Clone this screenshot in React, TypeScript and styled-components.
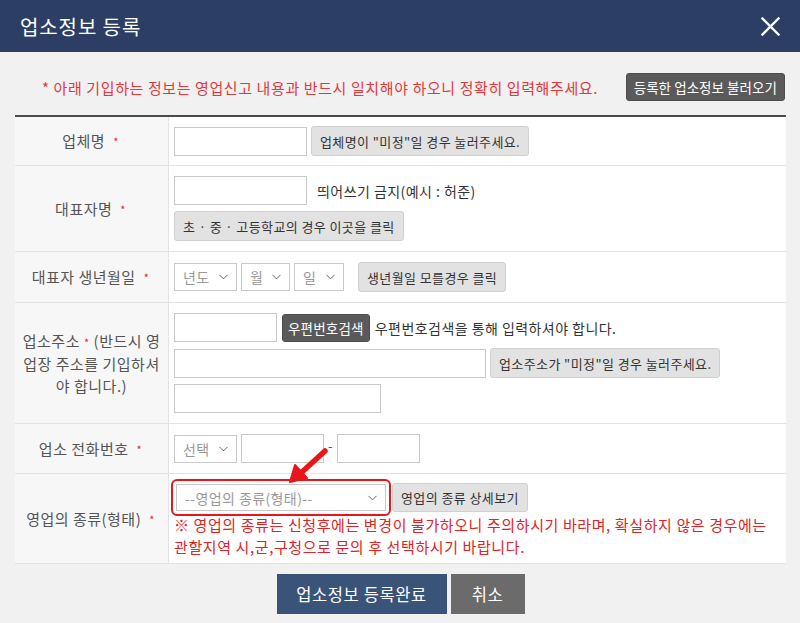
import React from 'react';
import styled, { createGlobalStyle } from 'styled-components';
import { ChevronDown } from 'lucide-react';

const GlobalStyle = createGlobalStyle`
  html, body {
    margin: 0;
    padding: 0;
    background: #f1f1f1;
  }
  * {
    box-sizing: border-box;
  }
  body {
    font-family: 'Noto Sans CJK KR', 'Noto Sans', sans-serif;
  }
`;

const Modal = styled.div`
  width: 800px;
  height: 623px;
  background: #f1f1f1;
  display: flex;
  flex-direction: column;
  overflow: hidden;
`;

const Header = styled.div`
  height: 52px;
  background: #2c3e63;
  display: flex;
  align-items: center;
  justify-content: space-between;
  padding: 0 20px 0 20px;
`;

const Title = styled.h1`
  margin: 0;
  font-size: 20px;
  font-weight: 400;
  color: #fff;
  letter-spacing: 0.9px;
`;

const CloseButton = styled.button`
  border: 0;
  background: none;
  padding: 0;
  width: 20px;
  height: 20px;
  display: flex;
  align-items: center;
  justify-content: center;
  cursor: pointer;
`;

const TopBar = styled.div`
  display: flex;
  align-items: center;
  justify-content: space-between;
  padding: 21px 15px 14px 42px;
`;

const Notice = styled.p`
  margin: 0;
  font-size: 15px;
  color: #e5383b;
  letter-spacing: 0.6px;
`;

const DarkButton = styled.button<{ $small?: boolean }>`
  height: 28px;
  padding: 0 ${({ $small }) => ($small ? '5px' : '7px')};
  background: #5a5a5a;
  border: 1px solid #4d4d4d;
  border-radius: 3px;
  color: #fff;
  font-family: inherit;
  font-size: 13.5px;
  letter-spacing: ${({ $small }) => ($small ? '0.2px' : '0.05px')};
  white-space: nowrap;
  cursor: pointer;
`;

const Table = styled.div`
  margin: 0 14px 0 15px;
  border-top: 2px solid #4a4a4a;
`;

const FormRow = styled.div`
  display: grid;
  grid-template-columns: 154px 1fr;
  border-bottom: 1px solid #e3e3e3;
`;

const LabelCell = styled.div`
  background: #f7f7f7;
  border-right: 1px solid #e3e3e3;
  display: flex;
  align-items: center;
  justify-content: center;
  text-align: center;
  padding: 0 3px;
  font-size: 15px;
  line-height: 22px;
  letter-spacing: 0.5px;
  color: #555;
`;

const Star = styled.span`
  color: #e8262b;
  font-size: 11px;
  margin-left: 8px;
  margin-right: 2px;
`;

const ValueCell = styled.div<{ $pad?: number }>`
  position: relative;
  background: #fff;
  padding: ${({ $pad }) => ($pad ?? 10)}px 5px;
  display: flex;
  flex-direction: column;
  align-items: flex-start;
  gap: 6px;
`;

const Line = styled.div<{ $gap?: number }>`
  display: flex;
  align-items: center;
  gap: ${({ $gap }) => ($gap ?? 4)}px;
`;

const TextInput = styled.input<{ $w: number }>`
  width: ${({ $w }) => $w}px;
  height: 29px;
  border: 1px solid #c9c9c9;
  background: #fff;
  padding: 0 6px;
  font-family: inherit;
  font-size: 13.5px;
  outline: none;
`;

const SelectWrap = styled.div<{ $w: number; $h?: number }>`
  position: relative;
  width: ${({ $w }) => $w}px;
  height: ${({ $h }) => $h ?? 28}px;
  flex: none;

  svg {
    position: absolute;
    right: 6px;
    top: 50%;
    transform: translateY(-50%);
    pointer-events: none;
  }
`;

const Select = styled.select`
  appearance: none;
  -webkit-appearance: none;
  width: 100%;
  height: 100%;
  border: 1px solid #c9c9c9;
  border-radius: 0;
  background: #fff;
  padding: 0 20px 0 8px;
  font-family: inherit;
  font-size: 14px;
  letter-spacing: 0.4px;
  color: #999;
  outline: none;
`;

const GrayButton = styled.button`
  height: 30px;
  padding: 0 8px;
  background: #e2e2e2;
  border: 1px solid #d0d0d0;
  border-radius: 3px;
  color: #333;
  font-family: inherit;
  font-size: 13px;
  letter-spacing: 0.4px;
  white-space: nowrap;
  cursor: pointer;
`;

const Hint = styled.span`
  font-size: 14px;
  letter-spacing: 0.45px;
  color: #333;
  white-space: nowrap;
`;

const Dash = styled.span`
  font-size: 13px;
  color: #555;
  margin: 0;
  align-self: flex-start;
  margin-top: 2px;
`;

const Highlight = styled.div`
  margin-left: -3px;
  padding: 3px;
  border: 2px solid #e8161b;
  border-radius: 6px;
  display: flex;
`;

const Warning = styled.p`
  margin: -2px 0 0;
  font-size: 15px;
  line-height: 22px;
  letter-spacing: 0.6px;
  color: #e02424;
  white-space: nowrap;
`;

const Pointer = styled.svg`
  position: absolute;
  left: 115px;
  top: -31px;
  pointer-events: none;
`;

const Actions = styled.div`
  display: flex;
  justify-content: center;
  gap: 4px;
  margin-top: 10px;
  padding-left: 1px;
`;

const ActionButton = styled.button<{ $variant: 'primary' | 'muted' }>`
  height: 40px;
  width: ${({ $variant }) => ($variant === 'primary' ? '170px' : '74px')};
  padding: 0;
  border: 0;
  border-radius: 0;
  background: ${({ $variant }) => ($variant === 'primary' ? '#3a5479' : '#6b6b6b')};
  color: #fff;
  font-family: inherit;
  font-size: 16.5px;
  letter-spacing: 0.6px;
  cursor: pointer;
`;

const Req = () => <Star>*</Star>;

function Dropdown({ width, height, placeholder }: { width: number; height?: number; placeholder: string }) {
  return (
    <SelectWrap $w={width} $h={height}>
      <Select defaultValue="">
        <option value="">{placeholder}</option>
      </Select>
      <ChevronDown size={15} strokeWidth={1.6} color="#666" />
    </SelectWrap>
  );
}

export default function App() {
  return (
    <>
      <GlobalStyle />
      <Modal>
        <Header>
          <Title>업소정보 등록</Title>
          <CloseButton aria-label="닫기">
            <svg width="19" height="19" viewBox="0 0 19 19">
              <path d="M1.5 1.5 L17.5 17.5 M17.5 1.5 L1.5 17.5" stroke="#fff" strokeWidth="2.4" strokeLinecap="square" />
            </svg>
          </CloseButton>
        </Header>

        <TopBar>
          <Notice>* 아래 기입하는 정보는 영업신고 내용과 반드시 일치해야 하오니 정확히 입력해주세요.</Notice>
          <DarkButton>등록한 업소정보 불러오기</DarkButton>
        </TopBar>

        <Table>
          <FormRow>
            <LabelCell>
              업체명
              <Req />
            </LabelCell>
            <ValueCell $pad={9}>
              <Line>
                <TextInput $w={133} />
                <GrayButton>업체명이 "미정"일 경우 눌러주세요.</GrayButton>
              </Line>
            </ValueCell>
          </FormRow>

          <FormRow>
            <LabelCell>
              대표자명
              <Req />
            </LabelCell>
            <ValueCell>
              <Line $gap={10}>
                <TextInput $w={133} />
                <Hint>띄어쓰기 금지(예시 : 허준)</Hint>
              </Line>
              <GrayButton>초 · 중 · 고등학교의 경우 이곳을 클릭</GrayButton>
            </ValueCell>
          </FormRow>

          <FormRow>
            <LabelCell>
              대표자 생년월일
              <Req />
            </LabelCell>
            <ValueCell>
              <Line>
                <Dropdown width={63} placeholder="년도" />
                <Dropdown width={49} placeholder="월" />
                <Dropdown width={50} placeholder="일" />
                <GrayButton style={{ marginLeft: 10 }}>생년월일 모를경우 클릭</GrayButton>
              </Line>
            </ValueCell>
          </FormRow>

          <FormRow>
            <LabelCell>
              <span>
                업소주소
                <Star style={{ margin: '0 4px' }}>*</Star>
                (반드시 영<br />
                업장 주소를 기입하셔
                <br />야 합니다.)
              </span>
            </LabelCell>
            <ValueCell>
              <Line $gap={5}>
                <TextInput $w={103} />
                <DarkButton $small>우편번호검색</DarkButton>
                <Hint>우편번호검색을 통해 입력하셔야 합니다.</Hint>
              </Line>
              <Line>
                <TextInput $w={312} />
                <GrayButton>업소주소가 "미정"일 경우 눌러주세요.</GrayButton>
              </Line>
              <TextInput $w={207} />
            </ValueCell>
          </FormRow>

          <FormRow>
            <LabelCell>
              업소 전화번호
              <Req />
            </LabelCell>
            <ValueCell>
              <Line>
                <Dropdown width={63} placeholder="선택" />
                <TextInput $w={83} />
                <Dash>-</Dash>
                <TextInput $w={83} />
              </Line>
            </ValueCell>
          </FormRow>

          <FormRow>
            <LabelCell>
              영업의 종류(형태)
              <Req />
            </LabelCell>
            <ValueCell $pad={5} style={{ gap: 0 }}>
              <Line $gap={1}>
                <Highlight>
                  <Dropdown width={210} height={27} placeholder="--영업의 종류(형태)--" />
                </Highlight>
                <GrayButton style={{ height: 29 }}>영업의 종류 상세보기</GrayButton>
              </Line>
              <Warning>
                ※ 영업의 종류는 신청후에는 변경이 불가하오니 주의하시기 바라며, 확실하지 않은 경우에는
                <br />
                관할지역 시,군,구청으로 문의 후 선택하시기 바랍니다.
              </Warning>
              <Pointer width="50" height="45" viewBox="0 0 50 45">
                <line x1="41" y1="8" x2="18" y2="29" stroke="#e8161b" strokeWidth="5.5" strokeLinecap="round" />
                <polygon points="6,39 11,22 23,35" fill="#e8161b" stroke="#e8161b" strokeWidth="2" strokeLinejoin="round" />
              </Pointer>
            </ValueCell>
          </FormRow>
        </Table>

        <Actions>
          <ActionButton $variant="primary">업소정보 등록완료</ActionButton>
          <ActionButton $variant="muted">취소</ActionButton>
        </Actions>
      </Modal>
    </>
  );
}
